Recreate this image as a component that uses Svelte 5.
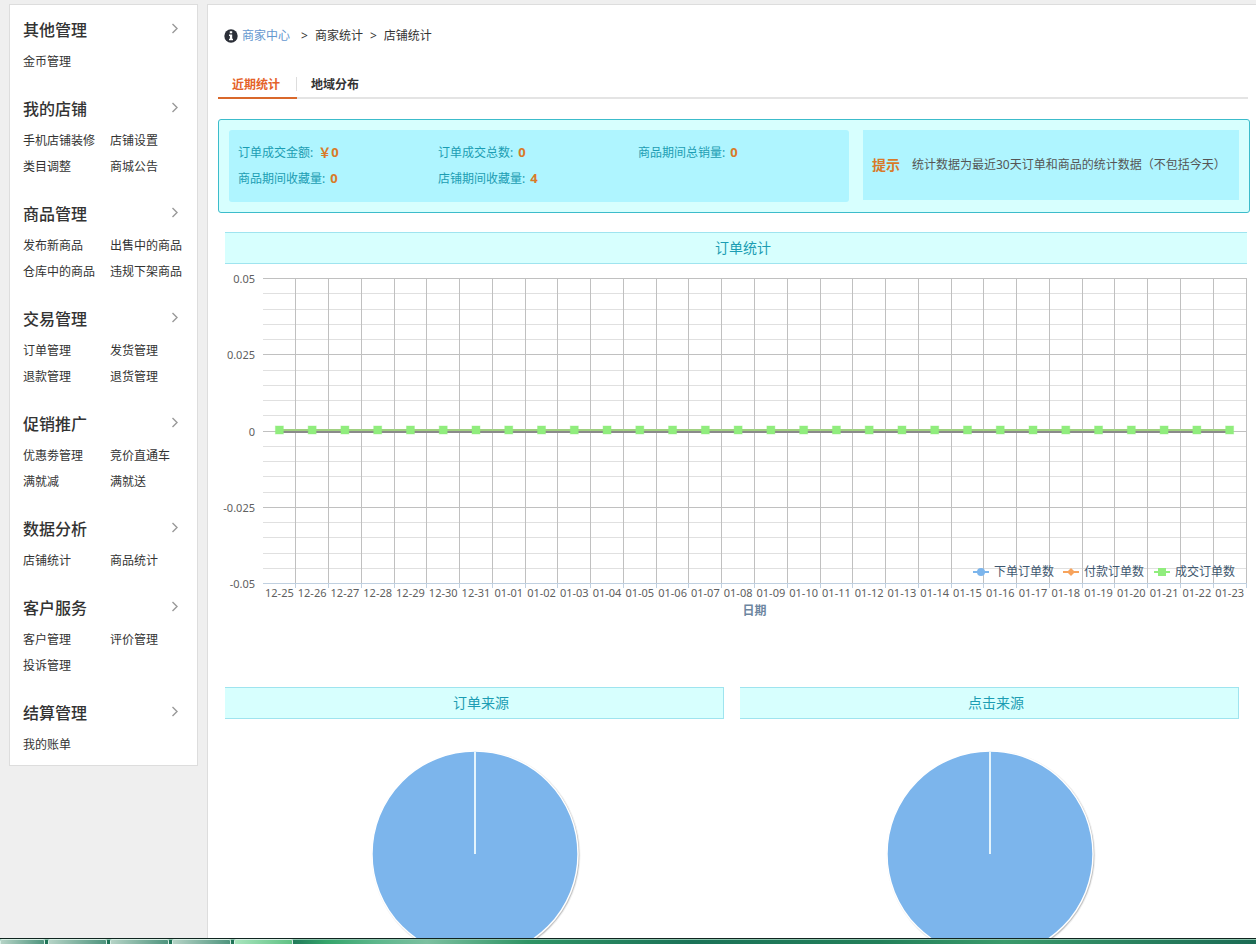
<script lang="ts">
	const menu = [
		{ title: '其他管理', links: ['金币管理'] },
		{ title: '我的店铺', links: ['手机店铺装修', '店铺设置', '类目调整', '商城公告'] },
		{ title: '商品管理', links: ['发布新商品', '出售中的商品', '仓库中的商品', '违规下架商品'] },
		{ title: '交易管理', links: ['订单管理', '发货管理', '退款管理', '退货管理'] },
		{ title: '促销推广', links: ['优惠劵管理', '竞价直通车', '满就减', '满就送'] },
		{ title: '数据分析', links: ['店铺统计', '商品统计'] },
		{ title: '客户服务', links: ['客户管理', '评价管理', '投诉管理'] },
		{ title: '结算管理', links: ['我的账单'] }
	];

	const tabs = ['近期统计', '地域分布'];
	let active = $state(0);

	const stats = [
		['订单成交金额', '￥0'],
		['订单成交总数', '0'],
		['商品期间总销量', '0'],
		['商品期间收藏量', '0'],
		['店铺期间收藏量', '4']
	];

	const dates = Array.from({ length: 30 }, (_, i) =>
		i < 7 ? `12-${25 + i}` : `01-${String(i - 6).padStart(2, '0')}`
	);

	// plot area inside the chart svg
	const left = 38;
	const top = 14;
	const plotHeight = 305;
	const bottom = top + plotHeight;
	const zero = 167;
	const yLabels = ['0.05', '0.025', '0', '-0.025', '-0.05'];

	let chartWidth = $state(1022);
	let right = $derived(chartWidth - 1);
	let step = $derived((right - left) / dates.length);
	let legendX = $derived(right - 273);

	const lineY = (i: number) => Math.round(top + (plotHeight * i) / 20) + 0.5;
	const lineX = (i: number) => Math.floor(left + step * i) + 0.5;
	const pointX = (i: number) => left + step * (i + 0.5);

	const pies = ['订单来源', '点击来源'];
	const tasks = [45, 59, 59, 59, 59];
</script>

<div class="screen">
	<div class="page">
		<nav class="sidebar">
			{#each menu as group (group.title)}
				<section class="group">
					<h3>
						{group.title}
						<svg width="8" height="14" viewBox="0 0 8 14">
							<path d="M1.5 1 6 5.5 1.5 10" fill="none" stroke="#999" stroke-width="1.4" />
						</svg>
					</h3>
					<div class="links">
						{#each group.links as link (link)}
							<a href="#top">{link}</a>
						{/each}
					</div>
				</section>
			{/each}
		</nav>

		<main>
			<div class="crumbs">
				<svg width="14" height="14" viewBox="0 0 14 14">
					<circle cx="7" cy="7" r="6.7" fill="#2b2f38" />
					<path d="M5.8 2.3h2.4v2H5.8zM5 5.4h3.2v4.3H9v1.5H5V9.7h.9V6.9H5z" fill="#fff" />
				</svg>
				<a href="#home">商家中心</a>
				<span class="sep first">&gt;</span>
				<span>商家统计</span>
				<span class="sep">&gt;</span>
				<span>店铺统计</span>
			</div>

			<div class="tabs">
				{#each tabs as tab, i (tab)}
					<button class:active={active == i} onclick={() => (active = i)}>{tab}</button>
				{/each}
			</div>

			<div class="summary">
				<div class="stats">
					{#each stats as [name, value] (name)}
						<span>{name}: <b>{value}</b></span>
					{/each}
				</div>
				<div class="tip">
					<b>提示</b>
					<span>统计数据为最近30天订单和商品的统计数据（不包括今天）</span>
				</div>
			</div>

			<section class="chart" bind:clientWidth={chartWidth}>
				<h2>订单统计</h2>
				<svg width={chartWidth} height="423">
					<g shape-rendering="crispEdges">
						{#each { length: 20 } as _, i}
							<line x1={left} x2={right} y1={lineY(i)} y2={lineY(i)} stroke={i % 5 ? '#e0e0e0' : '#c0c0c0'} />
						{/each}
						{#each dates as date, i (date)}
							<line x1={lineX(i + 1)} x2={lineX(i + 1)} y1={top} y2={bottom} stroke="#c0c0c0" />
							<line x1={lineX(i + 1)} x2={lineX(i + 1)} y1={bottom} y2={bottom + 5} stroke="#c0d0e0" />
						{/each}
						<line x1={left} x2={right} y1={bottom + 0.5} y2={bottom + 0.5} stroke="#c0d0e0" />
					</g>

					{#each yLabels as label, i (label)}
						<text class="axis" x="30" y={lineY(i * 5) + 4} text-anchor="end">{label}</text>
					{/each}
					{#each dates as date, i (date)}
						<text class="axis" x={pointX(i)} y={bottom + 14} text-anchor="middle">{date}</text>
					{/each}
					<text class="axis-title" x={(left + right) / 2} y={bottom + 32} text-anchor="middle">日期</text>

					<line x1={pointX(0)} x2={pointX(29)} y1={zero + 1} y2={zero + 1} stroke="#8a8a8a" stroke-width="2" />
					<line x1={pointX(0)} x2={pointX(29)} y1={zero - 1} y2={zero - 1} stroke="#a0d080" stroke-width="2" />
					{#each dates as date, i (date)}
						<rect x={pointX(i) - 4} y={zero - 5} width="8" height="8" fill="#90ed7d" stroke="#90ed7d" stroke-opacity=".4" />
					{/each}

					<g transform="translate({legendX} 308)">
						<path d="M0 0h16" stroke="#7cb5ec" stroke-width="2" />
						<circle cx="8" cy="0" r="4" fill="#7cb5ec" />
						<text class="legend" x="21" y="4">下单订单数</text>
						<path d="M90 0h16" stroke="#f7a35c" stroke-width="2" />
						<path d="M98-4l4 4-4 4-4-4z" fill="#f7a35c" />
						<text class="legend" x="111" y="4">付款订单数</text>
						<path d="M181 0h16" stroke="#90ed7d" stroke-width="2" />
						<path d="M185-4h8v8h-8z" fill="#90ed7d" />
						<text class="legend" x="202" y="4">成交订单数</text>
					</g>
				</svg>
			</section>

			<div class="pies">
				{#each pies as pie (pie)}
					<section>
						<h2>{pie}</h2>
						<svg width="220" height="300" viewBox="0 0 220 300">
							<g fill="none" stroke="#000">
								<circle cx="111" cy="136" r="102.5" stroke-width="4" stroke-opacity=".06" />
								<circle cx="111" cy="136" r="102.5" stroke-width="2" stroke-opacity=".18" />
							</g>
							<circle cx="110" cy="135" r="103" fill="#7cb5ec" stroke="#fff" stroke-width="1.4" />
							<path d="M110 32v103" stroke="#e4f4fc" stroke-width="2" />
						</svg>
					</section>
				{/each}
			</div>
		</main>
	</div>

	<footer class="taskbar">
		{#each tasks as width, i}
			<button class:current={i == 4} style:width="{width}px" aria-label="窗口 {i + 1}"></button>
		{/each}
	</footer>
</div>

<style>
	:global(body) {
		background: #efefef;
	}
	.screen {
		display: flex;
		flex-direction: column;
		height: 100vh;
		font: 12px/26px 'Noto Sans', 'Noto Sans CJK SC', sans-serif;
		color: #333;
	}
	.page {
		display: flex;
		flex: 1;
		min-height: 0;
		align-items: flex-start;
		gap: 9px;
		padding: 4px 0 0 9px;
		overflow: auto;
		scrollbar-width: none;
		box-sizing: border-box;
	}
	a {
		color: inherit;
		text-decoration: none;
	}
	svg {
		display: block;
		overflow: visible;
	}

	.sidebar {
		flex: none;
		width: 187px;
		background: #fff;
		border: 1px solid #ddd;
	}
	.group {
		padding: 7px 0 9px 13px;
	}
	.group:last-child {
		padding-bottom: 7px;
	}
	.group h3 {
		display: flex;
		justify-content: space-between;
		align-items: center;
		margin: 0 0 1px;
		padding-right: 18px;
		font-size: 16px;
		font-weight: 500;
		line-height: 36px;
	}
	.links {
		display: grid;
		grid-template-columns: 1fr 1fr;
		white-space: nowrap;
	}

	main {
		flex: 1;
		min-width: 0;
		padding: 18px 6px 0 10px;
		background: #fff;
		border: solid #ddd;
		border-width: 1px 0 0 1px;
	}
	.crumbs {
		display: flex;
		align-items: center;
		padding-left: 6px;
	}
	.crumbs a {
		margin-left: 4px;
		color: #6497cf;
	}
	.sep {
		margin: 0 7px;
	}
	.sep.first {
		margin-left: 11px;
	}

	.tabs {
		display: flex;
		margin: 21px 2px 20px 0;
		border-bottom: 2px solid #e4e4e4;
	}
	.tabs button {
		margin-bottom: -2px;
		padding: 2px 15px 0 14px;
		border: 0;
		border-bottom: 2px solid transparent;
		background: linear-gradient(#ddd, #ddd) no-repeat right center / 1px 14px;
		font: inherit;
		font-weight: 700;
		line-height: 25px;
		color: #333;
		cursor: pointer;
	}
	.tabs button:last-child {
		background: none;
	}
	.tabs .active {
		padding-right: 17px;
		border-bottom-color: #d9682b;
		color: #e4622a;
	}

	.summary {
		display: flex;
		align-items: flex-start;
		gap: 14px;
		padding: 10px;
		background: #d7fffe;
		border: 1px solid #3cbccb;
		border-radius: 3px;
	}
	.stats {
		display: grid;
		grid-template-columns: repeat(3, 200px);
		flex: none;
		padding: 10px 11px 10px 9px;
		border-radius: 3px;
		background: #aff5ff;
		color: #1c9db3;
	}
	.stats b {
		margin-left: 2px;
		font-size: 13px;
		line-height: 1;
		color: #d97a28;
	}
	.tip {
		display: flex;
		flex: 1;
		align-items: center;
		gap: 12px;
		height: 70px;
		padding-left: 9px;
		background: #aff5ff;
		color: #555;
		white-space: nowrap;
	}
	.tip b {
		font-size: 14px;
		color: #d97a28;
	}

	h2 {
		margin: 0;
		padding-left: 14px;
		border: solid #9fe4ef;
		border-width: 1px 0;
		background: #d7fffe;
		font-size: 14px;
		font-weight: 400;
		line-height: 30px;
		text-align: center;
		color: #1c9db3;
	}
	.chart {
		margin: 19px 3px 0 7px;
	}
	.axis {
		font-size: 11px;
		fill: #606060;
	}
	.axis-title {
		font-size: 12px;
		font-weight: 700;
		fill: #6d869f;
	}
	.legend {
		font-size: 12px;
		fill: #3e576f;
	}

	.pies {
		display: grid;
		grid-template-columns: 1fr 1fr;
		gap: 16px;
		margin: 0 11px 0 7px;
	}
	.pies h2 {
		border-right-width: 1px;
	}
	.pies svg {
		margin: 0 auto;
	}

	.taskbar {
		display: flex;
		flex: none;
		gap: 3px;
		height: 5px;
		border-top: 1px solid #10241f;
		background: linear-gradient(90deg, #1f7558 0 23%, #35a56b 26%, #5db78c 30%, #7cc0a0 34%, #2f9465 42%, #1b7358 55%, #23805a 70%, #3a9a6b 80%, #1b6b54 100%);
		box-shadow: inset 0 1px #8cc4ad;
	}
	.taskbar button {
		padding: 0;
		border: 1px solid #d6efe4;
		border-bottom: 0;
		border-radius: 2px 2px 0 0;
		background: linear-gradient(90deg, #b5d3c6, #4f957e);
	}
	.taskbar .current {
		background: linear-gradient(90deg, #a8e5bd, #5fc184);
	}
</style>
